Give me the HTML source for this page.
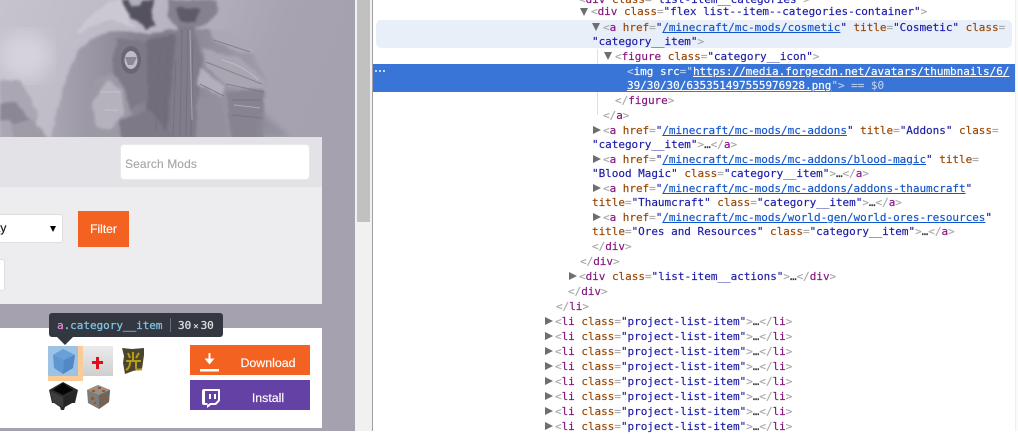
<!DOCTYPE html>
<html><head><meta charset="utf-8"><style>
html,body{margin:0;padding:0;width:1018px;height:431px;overflow:hidden;background:#fff}
.a{position:absolute}
.l{position:absolute;font:11px/15px "DejaVu Sans Mono","Liberation Mono",monospace;white-space:pre;color:#881280;height:15px;letter-spacing:-.03px;-webkit-text-stroke:.15px}
.t{color:#a8a8a8}.n{color:#994500}.v{color:#1a1aa6}.u{color:#1155cc;text-decoration:underline}
.s{font-family:"Liberation Sans",sans-serif;-webkit-text-stroke:.15px}
.tri{position:absolute;width:0;height:0;border-left:8px solid #6e6e6e;border-top:4px solid transparent;border-bottom:4px solid transparent;}
.td{position:absolute;width:0;height:0;border-top:8px solid #6e6e6e;border-left:4.5px solid transparent;border-right:4.5px solid transparent;}
.w,.w span{color:#fff}
</style></head><body>
<svg class="a" style="left:0;top:0" width="355" height="431" viewBox="0 0 355 431">
<defs>
<linearGradient id="g" x1="0" y1="0" x2="1" y2="0.15"><stop offset="0" stop-color="#c6c3ce"/><stop offset=".4" stop-color="#bcb9c4"/><stop offset=".8" stop-color="#a7a3b0"/><stop offset="1" stop-color="#a5a1ae"/></linearGradient>
<linearGradient id="bd" x1="0" y1="0" x2="1" y2="0"><stop offset="0" stop-color="#aaa7b3"/><stop offset=".25" stop-color="#95919f"/><stop offset=".5" stop-color="#807c8a"/><stop offset=".8" stop-color="#96929f"/><stop offset="1" stop-color="#a09caa"/></linearGradient>
<filter id="b" x="-10%" y="-10%" width="120%" height="120%" color-interpolation-filters="sRGB"><feTurbulence type="fractalNoise" baseFrequency=".12" numOctaves="2" seed="4" result="n"/><feDisplacementMap in="SourceGraphic" in2="n" scale="4" xChannelSelector="R" yChannelSelector="G" result="d"/><feGaussianBlur in="d" stdDeviation="1.3"/></filter>
<filter id="b2"><feGaussianBlur stdDeviation="9"/></filter>
<filter id="b3"><feGaussianBlur stdDeviation="3"/></filter>
</defs>
<rect width="355" height="431" fill="#a5a1ae"/>
<rect width="355" height="137" fill="url(#g)"/>
<ellipse cx="25" cy="56" rx="26" ry="24" fill="#d6d3dd" filter="url(#b2)"/>
<g filter="url(#b)">
<path d="M58 108 66 80 78 50 95 36 118 30 150 34 170 30 215 30 250 48 266 80 264 140 50 140Z" fill="url(#bd)"/>
<path d="M76 32 88 18 102 8 110 0 122 0 128 18 136 28 112 20 92 26 80 34Z" fill="#cbc8d2"/>
<path d="M122 0 155 0 152 12 155 26 146 30 140 22 130 18Z" fill="#55525f"/>
<path d="M128 0 142 0 140 6 132 7Z" fill="#b0adb8"/>
<path d="M168 0 216 0 218 12 208 22 198 28 178 28 168 18Z" fill="#85818f"/>
<path d="M176 7 200 9 196 22 180 22Z" fill="#5f5b69"/>
<path d="M178 26 195 26 201 60 196 140 166 140 170 80Z" fill="#807c8a"/>
<path d="M147 40 176 34 166 140 147 140Z" fill="#716d7b"/>
<path d="M147 42 146 100 122 115 112 60 118 38Z" fill="#7d7986"/>
<path d="M210 30 232 32 256 52 242 54 216 42Z" fill="#aba8b3"/>
<path d="M202 48 240 58 264 80 266 90 228 86 206 68Z" fill="#a9a6b1"/>
<path d="M200 68 225 86 222 97 197 84Z" fill="#b3b0bb"/>
<path d="M226 92 264 88 264 140 232 140Z" fill="#878391"/>
<path d="M197 97 222 102 228 140 197 140Z" fill="#938f9c"/>
<path d="M84 140 84 100 96 78 112 74 124 86 130 112 150 140Z" fill="#9c99a5"/>
<path d="M92 102 108 80 122 90 124 114 110 130 96 126Z" fill="#b5b2bd"/>
<path d="M120 120 150 110 176 140 122 140Z" fill="#7d7986"/>
<path d="M0 80 20 80 28 94 38 114 32 140 0 140Z" fill="#aaa7b3"/>
<path d="M0 104 16 102 30 120 22 130 8 120 0 120Z" fill="#8b8795"/>
<path d="M12 124 34 120 50 140 14 140Z" fill="#9f9ca8"/>
</g>
<g filter="url(#b3)" opacity=".8"><path d="M262 112 290 137 256 137Z" fill="#8f8b99"/></g>
<ellipse cx="131" cy="60" rx="10" ry="14" fill="#6a6674"/><ellipse cx="131" cy="60" rx="6.500" ry="9" fill="#bfbcc7"/><path d="M125 57h12l-4 8h-5Z" fill="#8b8794"/>
<g stroke="#6e6a78" stroke-width="1" fill="none" opacity=".6"><path d="M182 30 180 136M188 30 186 136M193 40 191 136M176 60 173 136"/><path d="M214 40 250 52M206 62 262 84M226 84 264 92M200 84 224 96M232 100 262 100M232 115 262 118M160 45 156 130M168 45 164 130"/></g>
<g stroke="#d6d3dc" stroke-width="1" fill="none" opacity=".5"><path d="M190 30 192 120M222 60C240 65 250 72 258 80M234 105 260 108M100 92 120 92M105 110 118 110"/></g>
</svg>
<div class="a" style="left:0;top:137px;width:322px;height:50px;background:#e3e2e7"></div>
<div class="a" style="left:0;top:187px;width:322px;height:117px;background:#edecef"></div>
<div class="a s" style="left:120px;top:144px;width:184px;height:34px;background:#fff;border:1px solid #e9e8ec;border-radius:4px;padding-left:4px;font-size:12px;letter-spacing:.12px;line-height:38px;color:#a8a8a8">Search Mods</div>
<div class="a s" style="left:-4px;top:214px;width:65px;height:27px;background:#fff;border:1px solid #dedede;border-radius:3px;font-size:12px;line-height:27px;color:#111"><span style="position:absolute;left:0;top:0">ty</span><span style="position:absolute;left:53px;top:11px;border-top:6px solid #000;border-left:3px solid transparent;border-right:3px solid transparent"></span></div>
<div class="a s" style="left:78px;top:211px;width:51px;height:36px;background:#f46221;color:#fff;font-size:12px;line-height:36px;text-align:center">Filter</div>
<div class="a" style="left:-4px;top:259px;width:7px;height:30px;background:#fff;border:1px solid #dedede;border-radius:3px"></div>
<div class="a" style="left:0;top:328px;width:322px;height:100px;background:#fff"></div>
<div class="a" style="left:48px;top:346px;width:35px;height:35px;background:#fbcb98"></div>
<div class="a" style="left:48px;top:346px;width:30px;height:30px;background:#9cc2e6"></div>
<svg class="a" style="left:48px;top:346px" width="32" height="32" viewBox="0 0 32 32">
<path d="M5 9 15 3 27 9 25 22 15 28 6 22Z" fill="#5f97d3"/><path d="M5 9 15 3 27 9 16 14Z" fill="#6aa0d8"/><path d="M16 14 27 9 25 22 15 28Z" fill="#5289c4"/>
</svg>
<div class="a" style="left:83px;top:346px;width:30px;height:30px;background:linear-gradient(#ebebeb,#cfcfcf)"></div>
<div class="a" style="left:92px;top:361px;width:11px;height:3px;background:#e00d1a"></div>
<div class="a" style="left:96px;top:357px;width:3px;height:12px;background:#e00d1a"></div>
<svg class="a" style="left:121px;top:347px" width="26" height="28" viewBox="0 0 26 28">
<path d="M1 1 11 2 23 1 23 8 21 22 12 24 4 27 2 16 3 9Z" fill="#4a4531"/>
<path d="M12 5V13M7 6 9 11M18 6 15 11M5 14H20M9 15C9 20 7 22 5 23M15 15V21C15 23 18 23 21 22" stroke="#b89c14" stroke-width="2" fill="none"/>
</svg>
<svg class="a" style="left:48px;top:381px" width="32" height="31" viewBox="0 0 32 31">
<path d="M1 9 15 1 30 9 27 22 24 22 17 26 16 29 13 29 12 26 6 22 4 22Z" fill="#2b2b2b"/>
<path d="M5 9 15 2 25 9 15 14Z" fill="#050505"/>
<path d="M2 10 15 16 15 26 5 21Z" fill="#3d3d3d"/>
<path d="M16 16 29 10 26 21 16 26Z" fill="#262626"/>
</svg>
<svg class="a" style="left:86px;top:384px" width="26" height="27" viewBox="0 0 26 27">
<path d="M1 6 12 1 24 6 23 18 13 25 2 19Z" fill="#7f7c78"/><path d="M1 6 12 1 24 6 13 11Z" fill="#95928d"/><path d="M13 11 24 6 23 18 13 25Z" fill="#6a6763"/>
<path d="M6 6h3v2H6zM12 3h3v2h-3zM16 6h3v2h-3zM15 13h3v3h-3zM19 14h2v3h-2zM5 13h3v3H5zM8 18h2v2H8zM15 19h3v2h-3z" fill="#a5551c"/>
</svg>
<div class="a" style="left:190px;top:345px;width:120px;height:30px;background:#f46221"></div>
<div class="a s" style="left:238px;top:345px;width:60px;height:36px;line-height:36px;color:#fff;font-size:12.400px;text-align:center">Download</div>
<svg class="a" style="left:200px;top:351px" width="20" height="22" viewBox="0 0 20 22"><rect x="8.500" y="2" width="2" height="6" fill="#fff"/><path d="M4.500 7.500H14.500L9.500 13.500Z" fill="#fff"/><rect x="0" y="18" width="19" height="2.500" fill="#fff"/></svg>
<div class="a" style="left:190px;top:380px;width:120px;height:30px;background:#6441a4"></div>
<div class="a s" style="left:238px;top:380px;width:60px;height:36px;line-height:36px;color:#fff;font-size:12.400px;text-align:center">Install</div>
<svg class="a" style="left:201px;top:388px" width="20" height="21" viewBox="0 0 20 21"><path d="M3 1H18C18.600 1 19 1.400 19 2V12C19 13 18 14 17 15L15 17H10L6 20V17H3C1.500 17 1 16 1 15V3C1 1.500 2 1 3 1Z" fill="#fff"/><path d="M4 3H17V12L14 15H9L6.500 17V15H4Z" fill="#6441a4"/><path d="M8 6H10V11H8ZM13 6H15V11H13Z" fill="#fff"/></svg>
<div class="a" style="left:49px;top:313px;width:174px;height:24px;background:#333740;border-radius:3px"></div>
<div class="a" style="left:57px;top:337px;border-top:8px solid #333740;border-left:8px solid transparent;border-right:8px solid transparent"></div>
<div class="a" style="left:170px;top:318px;width:1px;height:14px;background:#6a6f78"></div>
<div class="l" style="left:57px;top:318px;color:#9bbbdc;-webkit-text-stroke:.25px"><span style="color:#e58ad2">a</span><span style="color:#7fc4e6">.category__item</span></div>
<div class="l" style="left:178px;top:318px;color:#e0e0e0;-webkit-text-stroke:.25px">30<span style="font-size:9px;margin:0 2px">×</span>30</div>
<div class="a" style="left:355px;top:0;width:17px;height:431px;background:#f1f1f1"></div>
<div class="a" style="left:357px;top:0;width:13px;height:222px;background:#c1c1c1"></div>
<div class="a" style="left:372px;top:0;width:1px;height:431px;background:#a0a0a0"></div>
<div class="a" style="left:1015px;top:0;width:3px;height:431px;background:#fafafa;border-left:1px solid #eee;box-sizing:border-box"></div>
<div class="a" style="left:376px;top:20px;width:636px;height:28px;background:#e8eff9;border-radius:5px"></div>
<div class="a" style="left:597px;top:49px;width:1px;height:66px;background:#e0e0e0"></div>
<div class="a" style="left:373px;top:64px;width:642px;height:28px;background:#3875d7"></div>
<div class="a" style="left:375px;top:70px;width:2px;height:2px;background:#c5d6f0"></div><div class="a" style="left:379px;top:70px;width:2px;height:2px;background:#c5d6f0"></div><div class="a" style="left:383px;top:70px;width:2px;height:2px;background:#c5d6f0"></div>

<div class="l" style="left:579px;top:-8px"><span class="t">&lt;</span>div <span class="n">class</span><span class="t">=</span><span class="v">"list-item__categories"</span><span class="t">&gt;</span></div>
<div class="td" style="left:580px;top:8px"></div>
<div class="l" style="left:591px;top:4px"><span class="t">&lt;</span>div <span class="n">class</span><span class="t">=</span><span class="v">"flex list--item--categories-container"</span><span class="t">&gt;</span></div>
<div class="td" style="left:592px;top:23px"></div>
<div class="l" style="left:603px;top:19.500px"><span class="t">&lt;</span>a <span class="n">href</span><span class="t">=</span><span class="v">"</span><span class="u">/minecraft/mc-mods/cosmetic</span><span class="v">"</span> <span class="n">title</span><span class="t">=</span><span class="v">"Cosmetic"</span> <span class="n">class</span><span class="t">=</span></div>
<div class="l" style="left:592px;top:34px"><span class="v">"category__item"</span><span class="t">&gt;</span></div>
<div class="td" style="left:604px;top:52px"></div>
<div class="l" style="left:615px;top:48.500px"><span class="t">&lt;</span>figure <span class="n">class</span><span class="t">=</span><span class="v">"category__icon"</span><span class="t">&gt;</span></div>
<div class="l w" style="left:627px;top:63.500px"><span style="color:#b5cdf0">&lt;</span><b style="font-weight:400">img</b> <span>src</span><span style="color:#b5cdf0">="</span><span style="text-decoration:underline">https://media.forgecdn.net/avatars/thumbnails/6/</span></div>
<div class="l w" style="left:627px;top:78px"><span style="text-decoration:underline">39/30/30/635351497555976928.png</span><span style="color:#b5cdf0">"&gt; == $0</span></div>
<div class="l" style="left:615px;top:92.500px"><span class="t">&lt;/</span>figure<span class="t">&gt;</span></div>
<div class="l" style="left:603px;top:107.500px"><span class="t">&lt;/</span>a<span class="t">&gt;</span></div>

<div class="tri" style="left:593px;top:126px"></div>
<div class="l" style="left:603px;top:122.500px"><span class="t">&lt;</span>a <span class="n">href</span><span class="t">=</span><span class="v">"</span><span class="u">/minecraft/mc-mods/mc-addons</span><span class="v">"</span> <span class="n">title</span><span class="t">=</span><span class="v">"Addons"</span> <span class="n">class</span><span class="t">=</span></div>
<div class="l" style="left:592px;top:137px"><span class="v">"category__item"</span><span class="t">&gt;</span><span style="color:#333">…</span><span class="t">&lt;/</span>a<span class="t">&gt;</span></div>
<div class="tri" style="left:593px;top:155px"></div>
<div class="l" style="left:603px;top:151.500px"><span class="t">&lt;</span>a <span class="n">href</span><span class="t">=</span><span class="v">"</span><span class="u">/minecraft/mc-mods/mc-addons/blood-magic</span><span class="v">"</span> <span class="n">title</span><span class="t">=</span></div>
<div class="l" style="left:592px;top:166px"><span class="v">"Blood Magic"</span> <span class="n">class</span><span class="t">=</span><span class="v">"category__item"</span><span class="t">&gt;</span><span style="color:#333">…</span><span class="t">&lt;/</span>a<span class="t">&gt;</span></div>
<div class="tri" style="left:593px;top:184px"></div>
<div class="l" style="left:603px;top:180.500px"><span class="t">&lt;</span>a <span class="n">href</span><span class="t">=</span><span class="v">"</span><span class="u">/minecraft/mc-mods/mc-addons/addons-thaumcraft</span><span class="v">"</span></div>
<div class="l" style="left:592px;top:195px"><span class="n">title</span><span class="t">=</span><span class="v">"Thaumcraft"</span> <span class="n">class</span><span class="t">=</span><span class="v">"category__item"</span><span class="t">&gt;</span><span style="color:#333">…</span><span class="t">&lt;/</span>a<span class="t">&gt;</span></div>
<div class="tri" style="left:593px;top:213px"></div>
<div class="l" style="left:603px;top:209.500px"><span class="t">&lt;</span>a <span class="n">href</span><span class="t">=</span><span class="v">"</span><span class="u">/minecraft/mc-mods/world-gen/world-ores-resources</span><span class="v">"</span></div>
<div class="l" style="left:592px;top:224px"><span class="n">title</span><span class="t">=</span><span class="v">"Ores and Resources"</span> <span class="n">class</span><span class="t">=</span><span class="v">"category__item"</span><span class="t">&gt;</span><span style="color:#333">…</span><span class="t">&lt;/</span>a<span class="t">&gt;</span></div>
<div class="l" style="left:592px;top:238.500px"><span class="t">&lt;/</span>div<span class="t">&gt;</span></div>
<div class="l" style="left:580px;top:253.500px"><span class="t">&lt;/</span>div<span class="t">&gt;</span></div>
<div class="tri" style="left:569px;top:272px"></div>
<div class="l" style="left:579px;top:268.500px"><span class="t">&lt;</span>div <span class="n">class</span><span class="t">=</span><span class="v">"list-item__actions"</span><span class="t">&gt;</span><span style="color:#333">…</span><span class="t">&lt;/</span>div<span class="t">&gt;</span></div>
<div class="l" style="left:568px;top:283.500px"><span class="t">&lt;/</span>div<span class="t">&gt;</span></div>
<div class="l" style="left:556px;top:298.500px"><span class="t">&lt;/</span>li<span class="t">&gt;</span></div>

<div class="tri" style="left:545px;top:317px"></div><div class="l" style="left:555px;top:313.500px"><span class="t">&lt;</span>li <span class="n">class</span><span class="t">=</span><span class="v">"project-list-item"</span><span class="t">&gt;</span><span style="color:#333">…</span><span class="t">&lt;/</span>li<span class="t">&gt;</span></div>
<div class="tri" style="left:545px;top:332px"></div><div class="l" style="left:555px;top:328.500px"><span class="t">&lt;</span>li <span class="n">class</span><span class="t">=</span><span class="v">"project-list-item"</span><span class="t">&gt;</span><span style="color:#333">…</span><span class="t">&lt;/</span>li<span class="t">&gt;</span></div>
<div class="tri" style="left:545px;top:347px"></div><div class="l" style="left:555px;top:343.500px"><span class="t">&lt;</span>li <span class="n">class</span><span class="t">=</span><span class="v">"project-list-item"</span><span class="t">&gt;</span><span style="color:#333">…</span><span class="t">&lt;/</span>li<span class="t">&gt;</span></div>
<div class="tri" style="left:545px;top:362px"></div><div class="l" style="left:555px;top:358.500px"><span class="t">&lt;</span>li <span class="n">class</span><span class="t">=</span><span class="v">"project-list-item"</span><span class="t">&gt;</span><span style="color:#333">…</span><span class="t">&lt;/</span>li<span class="t">&gt;</span></div>
<div class="tri" style="left:545px;top:377px"></div><div class="l" style="left:555px;top:373.500px"><span class="t">&lt;</span>li <span class="n">class</span><span class="t">=</span><span class="v">"project-list-item"</span><span class="t">&gt;</span><span style="color:#333">…</span><span class="t">&lt;/</span>li<span class="t">&gt;</span></div>
<div class="tri" style="left:545px;top:392px"></div><div class="l" style="left:555px;top:388.500px"><span class="t">&lt;</span>li <span class="n">class</span><span class="t">=</span><span class="v">"project-list-item"</span><span class="t">&gt;</span><span style="color:#333">…</span><span class="t">&lt;/</span>li<span class="t">&gt;</span></div>
<div class="tri" style="left:545px;top:407px"></div><div class="l" style="left:555px;top:403.500px"><span class="t">&lt;</span>li <span class="n">class</span><span class="t">=</span><span class="v">"project-list-item"</span><span class="t">&gt;</span><span style="color:#333">…</span><span class="t">&lt;/</span>li<span class="t">&gt;</span></div>
<div class="tri" style="left:545px;top:422px"></div><div class="l" style="left:555px;top:418.500px"><span class="t">&lt;</span>li <span class="n">class</span><span class="t">=</span><span class="v">"project-list-item"</span><span class="t">&gt;</span><span style="color:#333">…</span><span class="t">&lt;/</span>li<span class="t">&gt;</span></div>
</body></html>
